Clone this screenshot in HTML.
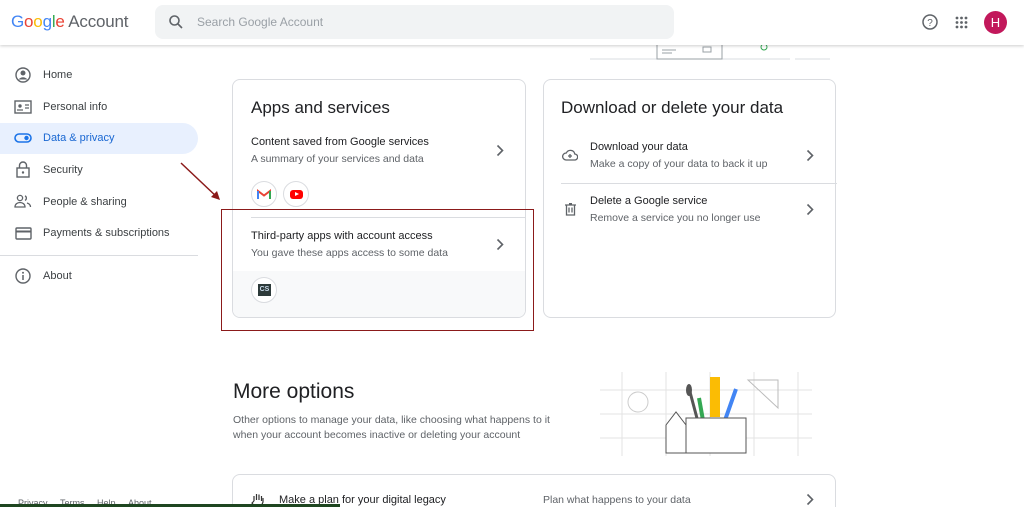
<!DOCTYPE html>
<html><head><meta charset="utf-8"><style>
*{box-sizing:border-box;margin:0;padding:0}
html{width:1024px;height:507px;overflow:hidden}
body{width:1024px;height:507px;overflow:hidden;background:#fff;font-family:"Liberation Sans",Arial,sans-serif;color:#202124;position:relative}
.a{position:absolute}
.hdr{left:0;top:0;width:1024px;height:45px;background:#fff;box-shadow:0 1px 3px rgba(0,0,0,.2);z-index:5}
.nav{font-size:11px;color:#3c4043}
.card{border:1px solid #dadce0;border-radius:8px;background:#fff}
.t1{font-size:11px;color:#202124}
.t2{font-size:10.5px;color:#5f6368}
.ic{width:26px;height:26px;border:1px solid #dadce0;border-radius:50%;background:#fff}
</style></head><body>
<div class="a hdr">
 <div class="a" style="left:11px;top:12px;font-size:17px;letter-spacing:-.2px"><span style="color:#4285f4">G</span><span style="color:#ea4335">o</span><span style="color:#fbbc05">o</span><span style="color:#4285f4">g</span><span style="color:#34a853">l</span><span style="color:#ea4335">e</span> <span style="color:#5f6368">Account</span></div>
 <div class="a" style="left:155px;top:5px;width:519px;height:34px;background:#f1f3f4;border-radius:8px"></div>
 <svg class="a" style="left:168px;top:14px" width="16" height="16" viewBox="0 0 16 16"><circle cx="6.5" cy="6.5" r="4.5" fill="none" stroke="#5f6368" stroke-width="1.6"/><path d="M10 10l4 4" stroke="#5f6368" stroke-width="1.6"/></svg>
 <div class="a" style="left:197px;top:15px;font-size:12px;color:#9aa0a6">Search Google Account</div>
 <svg class="a" style="left:921px;top:13px" width="18" height="18" viewBox="0 0 18 18"><circle cx="9" cy="9" r="7" fill="none" stroke="#5f6368" stroke-width="1.5"/><text x="9" y="13" font-size="10" text-anchor="middle" fill="#5f6368" font-family="Liberation Sans">?</text></svg>
 <svg class="a" style="left:955px;top:16px" width="13" height="13" viewBox="0 0 13 13" fill="#5f6368"><circle cx="2" cy="2" r="1.4"/><circle cx="6.5" cy="2" r="1.4"/><circle cx="11" cy="2" r="1.4"/><circle cx="2" cy="6.5" r="1.4"/><circle cx="6.5" cy="6.5" r="1.4"/><circle cx="11" cy="6.5" r="1.4"/><circle cx="2" cy="11" r="1.4"/><circle cx="6.5" cy="11" r="1.4"/><circle cx="11" cy="11" r="1.4"/></svg>
 <div class="a" style="left:984px;top:11px;width:23px;height:23px;border-radius:50%;background:#c2185b;color:#fff;font-size:13px;text-align:center;line-height:23px">H</div>
</div>
<svg class="a" style="left:590px;top:44px" width="240" height="16"><path d="M0 15H80M88 15H200M205 15H245" stroke="#dadce0"/><rect x="67" y="0" width="65" height="15" fill="none" stroke="#9aa0a6"/><path d="M72 6h14M72 9h10" stroke="#9aa0a6"/><rect x="113" y="3" width="8" height="5" fill="none" stroke="#9aa0a6"/><circle cx="174" cy="3" r="3" fill="none" stroke="#34a853"/></svg>
<!-- sidebar -->
<div class="a" style="left:0;top:123px;width:198px;height:31px;background:#e8f0fe;border-radius:0 16px 16px 0"></div>
<svg class="a" style="left:15px;top:67px" width="16" height="16" viewBox="0 0 16 16"><circle cx="8" cy="8" r="7" fill="none" stroke="#5f6368" stroke-width="1.4"/><circle cx="8" cy="6" r="2.5" fill="#5f6368"/><path d="M3.5 12.5c2.5-3 6.5-3 9 0" fill="#5f6368"/></svg>
<div class="a nav" style="left:43px;top:69px">Home</div>
<svg class="a" style="left:14px;top:99px" width="18" height="15" viewBox="0 0 18 15"><rect x="1" y="2" width="16" height="12" fill="none" stroke="#5f6368" stroke-width="1.4"/><circle cx="6" cy="7" r="1.7" fill="#5f6368"/><path d="M3 11h6M11 6h4M11 9h4" stroke="#5f6368" stroke-width="1.3"/></svg>
<div class="a nav" style="left:43px;top:101px">Personal info</div>
<svg class="a" style="left:14px;top:133px" width="18" height="10" viewBox="0 0 18 10"><rect x="1" y="1" width="16" height="8" rx="4" fill="none" stroke="#1a73e8" stroke-width="1.6"/><circle cx="12.5" cy="5" r="2.2" fill="#1a73e8"/></svg>
<div class="a nav" style="left:43px;top:132px;color:#1967d2">Data &amp; privacy</div>
<svg class="a" style="left:16px;top:161px" width="14" height="17" viewBox="0 0 14 17"><rect x="1" y="7" width="12" height="9" fill="none" stroke="#5f6368" stroke-width="1.4"/><path d="M3.5 7V4.5a3.5 3.5 0 0 1 7 0V7" fill="none" stroke="#5f6368" stroke-width="1.4"/><circle cx="7" cy="11.5" r="1.2" fill="#5f6368"/></svg>
<div class="a nav" style="left:43px;top:164px">Security</div>
<svg class="a" style="left:14px;top:194px" width="18" height="14" viewBox="0 0 18 14"><circle cx="6" cy="4" r="2.6" fill="none" stroke="#5f6368" stroke-width="1.3"/><path d="M1 13c0-3 2.5-4.5 5-4.5s5 1.5 5 4.5z" fill="none" stroke="#5f6368" stroke-width="1.3"/><path d="M11 1.8a2.6 2.6 0 0 1 0 4.6M13 9c2 .6 3.5 2 3.5 4" fill="none" stroke="#5f6368" stroke-width="1.3"/></svg>
<div class="a nav" style="left:43px;top:196px">People &amp; sharing</div>
<svg class="a" style="left:15px;top:227px" width="17" height="13" viewBox="0 0 17 13"><rect x="1" y="1" width="15" height="11" rx="1" fill="none" stroke="#5f6368" stroke-width="1.4"/><path d="M1 4.5h15" stroke="#5f6368" stroke-width="2"/></svg>
<div class="a nav" style="left:43px;top:227px">Payments &amp; subscriptions</div>
<div class="a" style="left:0;top:255px;width:198px;height:1px;background:#dadce0"></div>
<svg class="a" style="left:15px;top:268px" width="16" height="16" viewBox="0 0 16 16"><circle cx="8" cy="8" r="7" fill="none" stroke="#5f6368" stroke-width="1.4"/><path d="M8 7v5" stroke="#5f6368" stroke-width="1.5"/><circle cx="8" cy="4.7" r="1" fill="#5f6368"/></svg>
<div class="a nav" style="left:43px;top:270px">About</div>
<div class="a" style="left:18px;top:498px;font-size:9px;color:#5f6368">Privacy&nbsp;&nbsp;&nbsp;&nbsp;&nbsp;Terms&nbsp;&nbsp;&nbsp;&nbsp;&nbsp;Help&nbsp;&nbsp;&nbsp;&nbsp;&nbsp;About</div>
<div class="a" style="left:0;top:504px;width:340px;height:3px;background:#1e4620;z-index:3"></div>
<svg class="a" style="left:178px;top:160px" width="46" height="44"><path d="M3 3L40 38" stroke="#8b1a1a" stroke-width="1.5"/><path d="M42 40l-9-3 6-6z" fill="#8b1a1a"/></svg>
<!-- Apps card -->
<div class="a card" style="left:232px;top:79px;width:294px;height:239px;overflow:hidden">
 <div class="a" style="left:18px;top:18px;font-size:17px">Apps and services</div>
 <div class="a t1" style="left:18px;top:56px">Content saved from Google services</div>
 <div class="a t2" style="left:18px;top:73px">A summary of your services and data</div>
 <svg class="a" style="left:263px;top:64px" width="8" height="13"><path d="M1.5 1.5l5 5-5 5" fill="none" stroke="#5f6368" stroke-width="1.6"/></svg>
 <div class="a ic" style="left:18px;top:101px"><svg class="a" style="left:5px;top:7px" width="14" height="11" viewBox="0 0 14 11"><path d="M1 10V2l6 4.5L13 2v8" fill="none" stroke="#ea4335" stroke-width="2"/><path d="M1 10V2" stroke="#4285f4" stroke-width="2"/><path d="M13 10V2" stroke="#34a853" stroke-width="2"/></svg></div>
 <div class="a ic" style="left:50px;top:101px"><div class="a" style="left:6px;top:8px;width:13px;height:9px;background:#ff0000;border-radius:3px"></div><div class="a" style="left:11px;top:10px;width:0;height:0;border-left:4px solid #fff;border-top:2.5px solid transparent;border-bottom:2.5px solid transparent"></div></div>
 <div class="a" style="left:18px;top:137px;width:276px;height:1px;background:#dadce0"></div>
 <div class="a t1" style="left:18px;top:150px">Third-party apps with account access</div>
 <div class="a t2" style="left:18px;top:167px">You gave these apps access to some data</div>
 <svg class="a" style="left:263px;top:158px" width="8" height="13"><path d="M1.5 1.5l5 5-5 5" fill="none" stroke="#5f6368" stroke-width="1.6"/></svg>
 <div class="a" style="left:0;top:191px;width:294px;height:48px;background:#f8f9fa"></div>
 <div class="a ic" style="left:18px;top:197px"><div class="a" style="left:6px;top:6px;width:13px;height:12px;background:#2d3a3a;color:#cde;font-size:7px;font-weight:bold;text-align:center;line-height:12px">CS</div></div>
</div>
<div class="a" style="left:221px;top:209px;width:313px;height:122px;border:1.5px solid #8b1a1a"></div>
<!-- Download card -->
<div class="a card" style="left:543px;top:79px;width:293px;height:239px">
 <div class="a" style="left:17px;top:18px;font-size:17px">Download or delete your data</div>
 <svg class="a" style="left:18px;top:69px" width="16" height="12" viewBox="0 0 16 12"><path d="M4 11h8.5a3 3 0 0 0 .3-6A4.5 4.5 0 0 0 4.3 4 3.5 3.5 0 0 0 4 11z" fill="none" stroke="#5f6368" stroke-width="1.3"/><path d="M8 5v4M6 7h4" stroke="#5f6368" stroke-width="1.3"/></svg>
 <div class="a t1" style="left:46px;top:61px">Download your data</div>
 <div class="a t2" style="left:46px;top:78px">Make a copy of your data to back it up</div>
 <svg class="a" style="left:262px;top:69px" width="8" height="13"><path d="M1.5 1.5l5 5-5 5" fill="none" stroke="#5f6368" stroke-width="1.6"/></svg>
 <div class="a" style="left:17px;top:103px;width:276px;height:1px;background:#dadce0"></div>
 <svg class="a" style="left:21px;top:123px" width="11" height="13" viewBox="0 0 11 13"><path d="M0 2h11M4 0.7h3M1.5 2v10h8V2M4 4.5v5M7 4.5v5" fill="none" stroke="#5f6368" stroke-width="1.3"/></svg>
 <div class="a t1" style="left:46px;top:115px">Delete a Google service</div>
 <div class="a t2" style="left:46px;top:132px">Remove a service you no longer use</div>
 <svg class="a" style="left:262px;top:123px" width="8" height="13"><path d="M1.5 1.5l5 5-5 5" fill="none" stroke="#5f6368" stroke-width="1.6"/></svg>
</div>
<!-- More options -->
<div class="a" style="left:233px;top:380px;font-size:21px">More options</div>
<div class="a t2" style="left:233px;top:413px;font-size:10.5px;line-height:15px;width:350px">Other options to manage your data, like choosing what happens to it<br>when your account becomes inactive or deleting your account</div>
<svg class="a" style="left:600px;top:372px" width="212" height="84" viewBox="0 0 212 84">
 <g stroke="#e3e3e3"><path d="M0 18H212M0 42H212M0 66H212M22 0V84M66 0V84M110 0V84M154 0V84M198 0V84"/></g>
 <path d="M148 8h30v28z" fill="none" stroke="#bbb"/>
 <circle cx="38" cy="30" r="10" fill="none" stroke="#ccc"/>
 <rect x="110" y="5" width="10" height="40" fill="#fbbc04"/>
 <path d="M90 20l8 30" stroke="#555" stroke-width="3"/><ellipse cx="89" cy="18" rx="3" ry="6" fill="#555"/>
 <path d="M99 26l5 28" stroke="#34a853" stroke-width="4"/>
 <path d="M136 17l-12 34" stroke="#4285f4" stroke-width="4"/>
 <path d="M66 53l10-13 10 13v28H66zM86 46h60v35H86z" fill="#fff" stroke="#555"/>
</svg>
<div class="a card" style="left:232px;top:474px;width:604px;height:50px">
 <svg class="a" style="left:18px;top:17px" width="14" height="16" viewBox="0 0 14 16"><path d="M3 9V4M5.5 8V2M8 8V2.5M10.5 9V4M3 9L1 11l3 4h6l2-5V6" fill="none" stroke="#333" stroke-width="1.2"/></svg>
 <div class="a t1" style="left:46px;top:19px">Make a plan for your digital legacy</div>
 <div class="a t2" style="left:310px;top:19px">Plan what happens to your data</div>
 <svg class="a" style="left:573px;top:18px" width="8" height="13"><path d="M1.5 1.5l5 5-5 5" fill="none" stroke="#5f6368" stroke-width="1.6"/></svg>
</div>
</body></html>
